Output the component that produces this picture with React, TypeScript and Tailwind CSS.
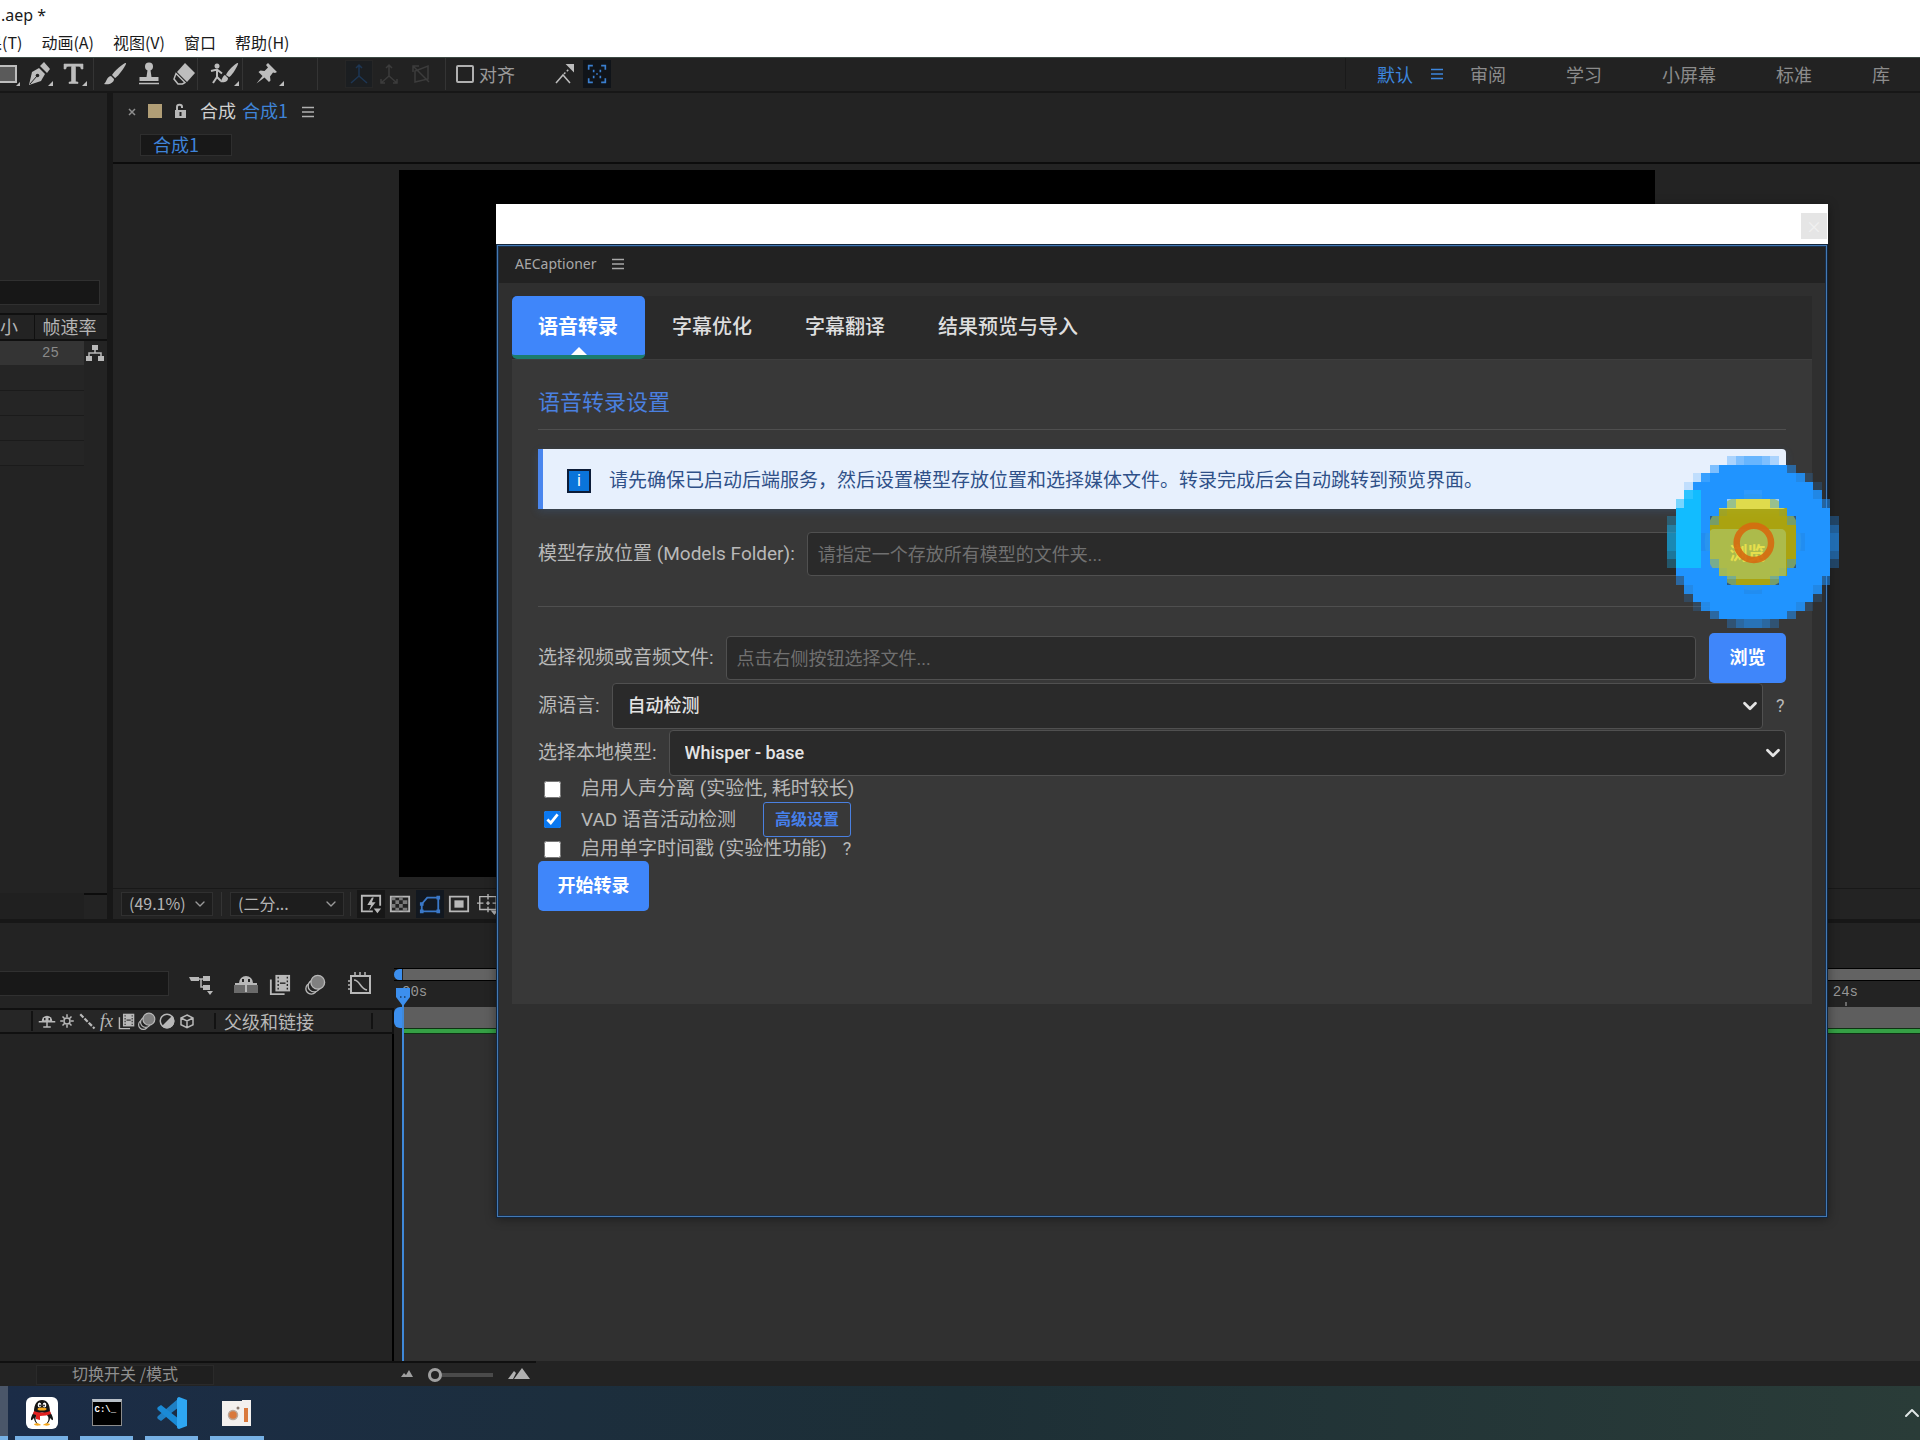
import type { ReactNode } from "react"
import clsx from "clsx"
import { ChevronDown, ChevronUp } from "lucide-react"

type IconProps = { className?: string; box?: string; children: ReactNode }

function Icon({ className, box = "0 0 24 24", children }: IconProps) {
  return (
    <svg viewBox={box} className={clsx("shrink-0", className)} fill="none" stroke="currentColor" strokeWidth="2" aria-hidden="true">
      {children}
    </svg>
  )
}

function Burger({ className }: { className?: string }) {
  return (
    <Icon box="0 0 12 12" className={clsx("h-3 w-3", className)}>
      <path d="M0 1.5h12M0 6h12M0 10.5h12" strokeWidth="1.5" />
    </Icon>
  )
}

/* small corner mark on tools that have a flyout */
const Flyout = () => <path d="M29 23v5h-5z" fill="currentColor" stroke="none" />

function ToolButton({ label, className, children }: { label: string; className?: string; children: ReactNode }) {
  return (
    <button type="button" aria-label={label} className={clsx("h-8 w-[34px] shrink-0", className)}>
      <svg viewBox="0 0 34 32" className="h-8 w-[34px]" fill="none" stroke="currentColor" strokeWidth="2" aria-hidden="true">
        {children}
      </svg>
    </button>
  )
}

const Divider = ({ className }: { className?: string }) => <span className={clsx("h-8 w-px shrink-0 bg-[#343434]", className)} />

function Toolbar() {
  return (
    <div className="flex h-[34px] items-center border-t border-[#3c4a44] bg-[#222222] pb-0.5 text-[#bdbdbd]">
      <div className="flex w-[318px] shrink-0 items-center overflow-hidden">
        <ToolButton label="矩形工具" className="-ml-[10px]">
          <rect x="5" y="8" width="21" height="16" fill="#5a5a5a" />
          <path d="M30 24v4h-4z" fill="currentColor" stroke="none" />
        </ToolButton>
        <ToolButton label="钢笔工具">
          <path d="M5 27l3-13 7-4 6 6-4 7z" fill="currentColor" stroke="none" />
          <path d="M16 8l4-4 6 7-3 4z" fill="currentColor" stroke="none" />
          <path d="M6 26l7-8" stroke="#222" strokeWidth="1" />
          <circle cx="13.500" cy="17.500" r="1.800" fill="#222" stroke="none" />
          <Flyout />
        </ToolButton>
        <ToolButton label="文字工具">
          <path d="M6 6h19v5h-1.800c-.3-2-1-2.700-3-2.700h-2.700v14c0 1.400.6 1.700 2.500 1.800v1.400h-9v-1.400c1.900-.1 2.500-.4 2.500-1.800v-14h-2.700c-2 0-2.700.7-3 2.700H6z" fill="currentColor" strokeWidth=".6" />
          <Flyout />
        </ToolButton>
        <Divider className="mx-px" />
        <ToolButton label="画笔工具">
          <path d="M31 5c1 1-8 14-11 15l-3-3C19 13 30 4 31 5z" fill="currentColor" stroke="none" />
          <path d="M16 18l3 3c0 4-5 6-10 5 3-2 2-7 7-8z" fill="currentColor" stroke="none" />
        </ToolButton>
        <ToolButton label="仿制图章工具">
          <circle cx="20" cy="8.500" r="4" fill="currentColor" stroke="none" />
          <path d="M18.500 12h3l1 7h7v4h-19v-4h7z" fill="currentColor" stroke="none" />
          <path d="M10 25.500h20" strokeWidth="1.500" />
        </ToolButton>
        <ToolButton label="橡皮擦工具">
          <path d="M22 5l10 10-8 9-10-10z" fill="currentColor" stroke="none" />
          <path d="M13 15.500l9 9-2.500 1.500H15l-4-5z" strokeWidth="1.500" />
        </ToolButton>
        <Divider />
        <ToolButton label="Roto 笔刷工具" className="ml-2 mr-0.5">
          <circle cx="11" cy="8" r="2.500" fill="currentColor" stroke="none" />
          <path d="M5 13l6-1.500 5 4M11 11v8l-4 6M11 19l4 4" />
          <path d="M32 5c1 1-6 13-9 14l-3-2C21 13 31 4 32 5z" fill="currentColor" stroke="none" />
          <path d="M19 17l3 3c0 4-4 5-8 4 2-1 2-6 5-7z" fill="currentColor" stroke="none" />
          <path d="M33 23v5h-5z" fill="currentColor" stroke="none" />
        </ToolButton>
        <Divider />
        <ToolButton label="操控点工具" className="ml-2">
          <path d="M17 5l9 9-2 1-2-.5-3 4 .5 4-1.500 1.500-4.500-4.500-8 6 6-7.500-4-4 2-1.500 4 .5 3.500-3.500L15 7z" fill="currentColor" stroke="none" />
          <path d="M33 23v5h-5z" fill="currentColor" stroke="none" />
        </ToolButton>
        <Divider className="ml-auto" />
      </div>

      <div className="flex items-center text-[#3c3c3c]">
        <button type="button" aria-label="本地轴模式" className="ml-[27px] flex h-7 w-7 items-center justify-center border border-[#262626] bg-[#1b1e21] text-[#1d3654]">
          <Icon className="h-6 w-6">
            <path d="M12 14V3M12 14l-8 7M12 14l8 7M9 6l3-3 3 3" strokeWidth="1.500" />
          </Icon>
        </button>
        <button type="button" aria-label="世界轴模式" className="ml-1">
          <Icon className="h-6 w-6">
            <path d="M12 14V3M12 14l-8 7M12 14l8 7M9 6l3-3 3 3M4 17v4h4M16 21h4v-4" strokeWidth="1.500" />
          </Icon>
        </button>
        <button type="button" aria-label="视图轴模式" className="ml-2">
          <Icon className="h-6 w-6">
            <path d="M4 4l16 16M4 10V4h6M6 20V9l13-5v13z" strokeWidth="1.500" />
          </Icon>
        </button>
        <Divider className="ml-3" />
      </div>

      <label className="ml-[10px] flex items-center gap-[5px] text-[18px] leading-6 text-[#9a9a9a]">
        <input type="checkbox" className="h-[18px] w-[18px] appearance-none rounded-xs border-2 border-[#b0b0b0]" />
        对齐
      </label>
      <Icon className="ml-9 h-6 w-6">
        <path d="M5 21l7-8 7 8" strokeWidth="1.500" />
        <path d="M13 12l5-5" strokeWidth="1.500" strokeDasharray="2 2" />
        <path d="M17 3h5v5z" fill="currentColor" />
      </Icon>
      <button type="button" aria-label="对齐选项" className="ml-2 flex h-7 w-7 items-center justify-center bg-[#101419] text-[#3a7fd0]">
        <Icon className="h-5 w-5">
          <path d="M2 7V2h5M17 2h5v5M22 17v5h-5M7 22H2v-5" />
          <path d="M8 7v3M16 7v3M8 14v3M16 14v3M11 12h2" />
        </Icon>
      </button>

      <nav aria-label="工作区" className="-mr-1 ml-auto flex h-full items-center gap-[60px] border-l border-[#1a1a1a] pl-[31px] text-[18px] leading-6 text-[#8c8c8c]">
        <span className="-mr-[33px] flex items-center gap-[18px] text-[#3d86dd]">
          <a href="#default">默认</a>
          <Burger />
        </span>
        <a href="#review">审阅</a>
        <a href="#learn">学习</a>
        <a href="#small">小屏幕</a>
        <a href="#standard">标准</a>
        <a href="#library" className="w-[52px]">库</a>
      </nav>
    </div>
  )
}

function ProjectPanel() {
  return (
    <aside className="flex w-[107px] shrink-0 flex-col overflow-hidden bg-[#232323]">
      <input aria-label="搜索项目" className="mt-[187px] h-[25px] w-[100px] border border-l-0 border-[#303030] bg-[#171717] px-2" />
      <table className="mt-2 w-full table-fixed border-collapse text-left">
        <thead>
          <tr className="h-[26px] border-y-2 border-[#101010] text-[18px] leading-5 text-[#b4b4b4]">
            <th className="w-[34px] border-r border-[#101010] p-0 pb-0.5 font-normal">小</th>
            <th className="w-[50px] whitespace-nowrap p-0 pb-0.5 pl-2 font-normal">帧速率</th>
            <th className="p-0" />
          </tr>
        </thead>
        <tbody>
          <tr className="h-[25px]">
            <td className="bg-[#343434] p-0" />
            <td className="bg-[#343434] p-0 pl-2 font-['Liberation_Mono',monospace] text-sm leading-5 text-[#8a8a8a]">25</td>
            <td className="p-0 pl-0.5 text-[#b8b8b8]">
              <Icon box="0 0 18 18" className="h-[18px] w-[18px]">
                <path d="M6 1h6v5H6zM0 12h6v5H0zM12 12h6v5h-6z" fill="currentColor" stroke="none" />
                <path d="M9 5v4M3 12V9h12v3" strokeWidth="1.500" />
              </Icon>
            </td>
          </tr>
          {[0, 1, 2, 3].map((row) => (
            <tr key={row} className="h-[25px]">
              <td colSpan={2} className="border-b border-[#1b1b1b] bg-[#252525] p-0" />
              <td className="p-0" />
            </tr>
          ))}
        </tbody>
      </table>
      <div className="mt-auto flex h-[26px]">
        <span className="w-[84px] bg-[#202020]" />
        <span className="flex-1 border-t-2 border-[#0c0c0c]" />
      </div>
    </aside>
  )
}

function FooterSelect({ label, value, className }: { label: string; value: string; className: string }) {
  return (
    <span className={clsx("relative flex h-6 items-center border border-[#303030] bg-[#1d1d1d]", className)}>
      <select aria-label={label} className="h-full w-full appearance-none pb-0.5 pl-[7px] leading-5 text-[#b4b4b4]">
        <option>{value}</option>
      </select>
      <ChevronDown className="pointer-events-none absolute right-1 h-4 w-4 text-[#9a9a9a]" />
    </span>
  )
}

function CompositionPanel() {
  return (
    <section className="flex min-w-0 flex-1 flex-col overflow-hidden bg-[#232323]">
      <div className="flex h-9 items-center pl-[15px] text-[18px] leading-6">
        <button type="button" aria-label="关闭合成" className="w-5 text-[#8f8f8f]">
          <Icon box="0 0 8 8" className="mt-0.5 h-2 w-2">
            <path d="M1 1l6 6M7 1L1 7" strokeWidth="1.500" />
          </Icon>
        </button>
        <span className="h-[14px] w-[14px] bg-[#b19e76]" />
        <Icon box="0 0 14 16" className="ml-3 h-4 w-[14px] text-[#b8b8b8]">
          <path d="M1 7h11v8H1z" fill="currentColor" stroke="none" />
          <path d="M3 8V4c0-3 5-3 5 0v1" />
          <path d="M6.500 9v4" stroke="#232323" />
        </Icon>
        <span className="ml-3 pb-0.5 text-[#d0d0d0]">合成</span>
        <span className="ml-1.5 pb-0.5 text-[#3f83d8]">合成1</span>
        <Burger className="ml-[14px] mt-0.5 text-[#b0b0b0]" />
      </div>
      <div className="flex h-[35px] items-start border-b-2 border-[#0c0c0c] pl-[27px] pt-[5px]">
        <button type="button" className="h-[22px] w-[92px] border border-[#2e2e2e] bg-[#181818] pb-0.5 pl-3 text-left text-[18px] leading-[18px] text-[#3f83d8]">
          合成1
        </button>
      </div>
      <div className="ml-[286px] mr-[265px] mt-1.5 flex-1 bg-black" />
      <div className="mt-[11px] flex h-[31px] items-center border-t border-[#181818] pl-2 text-base text-[#b8b8b8]">
        <FooterSelect label="放大率" value="(49.1%)" className="w-[92px]" />
        <Divider className="mx-2 !h-6" />
        <FooterSelect label="分辨率" value="(二分..." className="w-[114px]" />
        <Divider className="mx-1.5 !h-6" />
        <button type="button" aria-label="快速预览" className="flex h-7 w-7 items-center justify-center bg-[#171717]">
          <Icon className="h-[22px] w-[22px]">
            <path d="M14 20H2V3h20v11" />
            <path d="M13 5l-5 8h4l-2 6 7-9h-4l2-5z" fill="currentColor" stroke="none" />
            <path d="M15 17h8l-4 5z" fill="currentColor" stroke="none" />
          </Icon>
        </button>
        <Icon className="ml-1 h-[22px] w-[22px]">
          <path d="M2 4h20v16H2z" />
          <path d="M3 4h4v4H3zM11 4h4v4h-4zM7 8h4v4H7zM15 8h5v4h-5zM3 12h4v4H3zM11 12h4v4h-4zM7 16h4v4H7zM15 16h5v4h-5z" fill="#7a7a7a" stroke="none" />
        </Icon>
        <button type="button" aria-label="切换蒙版可见性" className="ml-[5px] flex h-7 w-7 items-center justify-center bg-[#121820] text-[#3a78c8]">
          <Icon className="h-[22px] w-[22px]">
            <path d="M3 20v-8l6-7h12v15z" />
            <path d="M1 18h4v4H1zM19 3h4v4h-4zM19 18h4v4h-4zM1 10h4v4H1z" fill="currentColor" stroke="none" />
          </Icon>
        </button>
        <Icon className="ml-1 h-[22px] w-[22px]">
          <path d="M2 4h20v16H2z" />
          <path d="M7 8h10v8H7z" fill="currentColor" stroke="none" />
        </Icon>
        <Icon className="ml-[7px] h-[22px] w-[22px]">
          <path d="M3 4h18v14H3zM0 11h7M17 11h7M12 1v6M12 15v6M10 11h4M12 9v4" strokeWidth="1.500" />
          <path d="M15 19h8l-4 5z" fill="currentColor" stroke="none" />
        </Icon>
      </div>
    </section>
  )
}

const ShyIcon = ({ className }: { className?: string }) => (
  <Icon className={className}>
    <path d="M5 12a7 7 0 0 1 14 0z" fill="currentColor" stroke="none" />
    <path d="M12 10v10M1 13h22M7 20h10" />
    <path d="M9 8v3M15 8v3" stroke="#232323" />
  </Icon>
)

const FilmIcon = ({ className }: { className?: string }) => (
  <Icon className={className}>
    <path d="M7 1h16v18H7z" fill="currentColor" stroke="none" />
    <path d="M2 6v16h15" />
    <path d="M10 3v15M20 3v15" stroke="#232323" strokeDasharray="2 2" strokeWidth="1.500" />
    <path d="M12 10h6" stroke="#232323" strokeWidth="1.500" />
  </Icon>
)

const BlurIcon = ({ className }: { className?: string }) => (
  <Icon className={className}>
    <circle cx="8" cy="16" r="6" strokeWidth="1.500" />
    <circle cx="11" cy="13" r="6.500" fill="#232323" strokeWidth="1.500" />
    <circle cx="15" cy="9" r="7.500" fill="#808080" strokeWidth="1.500" />
  </Icon>
)

function TimelineSwitches() {
  return (
    <div className="flex w-[394px] shrink-0 flex-col bg-[#232323] text-[#b8b8b8]">
      <div className="flex h-[85px] items-end pb-3">
        <input aria-label="搜索图层" className="h-[25px] w-[169px] border border-l-0 border-[#303030] bg-[#181818] px-2" />
        <Icon className="ml-5 h-6 w-6">
          <path d="M0 5h10v4H2zM14 4h7v5h-7zM14 13h7v5h-7z" fill="currentColor" stroke="none" />
          <path d="M9 7h6M12 7v8h4" strokeWidth="1.500" />
          <path d="M18 19h6l-3 4z" fill="currentColor" stroke="none" />
        </Icon>
        <Icon className="ml-[21px] h-6 w-6">
          <path d="M0 13h24v8H0z" fill="#6a6a6a" stroke="none" />
          <path d="M5 11a7 7 0 0 1 14 0z" fill="currentColor" stroke="none" />
          <path d="M12 9v11M1 12h22" />
          <path d="M9 7v3M15 7v3" stroke="#232323" />
        </Icon>
        <FilmIcon className="ml-[11px] h-[22px] w-[22px]" />
        <BlurIcon className="ml-[13px] h-[22px] w-[22px]" />
        <Icon className="ml-[22px] h-6 w-6">
          <path d="M3 4h19v17H3z" />
          <path d="M6 8c6 0 6 9 13 10M7 0v3M12 0v3M17 0v3M0 9h3M0 13h3M0 17h3" strokeWidth="1.500" />
        </Icon>
      </div>
      <div className="flex h-[26px] items-center border-y-2 border-r-2 border-[#101010] bg-[#262626]">
        <div className="ml-[31px] flex items-center gap-0.5 border-l-2 border-[#121212] pl-[5px]">
          <ShyIcon className="h-[18px] w-[18px]" />
          <Icon className="h-[18px] w-[18px]">
            <circle cx="12" cy="12" r="4" />
            <path d="M12 3v4M12 17v4M3 12h4M17 12h4M6 6l3 3M15 15l3 3M18 6l-3 3M6 18l3-3" />
          </Icon>
          <Icon className="h-[18px] w-[18px]">
            <path d="M3 3l19 19" strokeWidth="3" strokeDasharray="6 2" />
          </Icon>
          <span className="w-[18px] pl-0.5 font-['Liberation_Serif',serif] text-[18px] italic leading-5">fx</span>
          <FilmIcon className="h-[17px] w-[17px]" />
          <BlurIcon className="h-[19px] w-[19px]" />
          <Icon className="h-[18px] w-[18px]">
            <circle cx="12" cy="12" r="9" />
            <path d="M19 5A9 9 0 0 1 5 19z" fill="currentColor" stroke="none" />
          </Icon>
          <Icon className="h-[18px] w-[18px]">
            <path d="M12 4l8 4v9l-8 4-8-4V8zM4 8l8 4 8-4M12 12v9" />
          </Icon>
        </div>
        <span className="ml-[18px] h-4 w-0.5 bg-[#121212]" />
        <span className="ml-2 pb-px text-[18px] leading-5">父级和链接</span>
        <span className="ml-[57px] h-4 w-0.5 bg-[#121212]" />
      </div>
      <div className="flex-1 border-r-2 border-black" />
    </div>
  )
}

function TimelineTrack() {
  return (
    <div className="flex min-w-0 flex-1 flex-col bg-[#232323]">
      <div className="mt-[45px] flex h-[13px] items-stretch border-y border-black">
        <span className="w-2 rounded-l-full bg-[#3c8fee]" />
        <span className="ml-px flex-1 bg-[#636363]" />
      </div>
      <div className="flex h-[26px] items-start pt-px font-['Liberation_Mono',monospace] text-sm leading-5 text-[#969696]">
        <span className="relative ml-2">
          00s
          <svg viewBox="0 0 16 20" className="absolute -left-[7px] top-1.5 h-5 w-4" aria-hidden="true">
            <path d="M1 0h14v9l-6 8H7L1 9z" fill="#3c8fee" />
            <path d="M5 9h1.500M9 9h1.500" stroke="#1a3c66" strokeWidth="1.500" />
          </svg>
        </span>
        <span className="ml-auto mr-[62px] flex flex-col">
          24s
          <span className="ml-3 h-1 w-0.5 bg-[#6a6a6a]" />
        </span>
      </div>
      <div className="flex h-[21px]">
        <span className="w-2 rounded-l-md bg-[#3c8fee]" />
        <span className="flex-1 bg-[#5e5e5e]" />
      </div>
      <div className="ml-[10px] h-1.5 border-y border-[#0d3312] bg-[#35a045]" />
      <div className="flex flex-1">
        <span className="w-2" />
        <span className="-mt-8 w-0.5 bg-[#3f88d8]" />
        <span className="flex-1 bg-[#303030]" />
      </div>
    </div>
  )
}

function Timeline() {
  return (
    <section className="flex h-[463px] flex-col">
      <div className="flex flex-1 bg-[#232323]">
        <TimelineSwitches />
        <TimelineTrack />
      </div>
      <div className="flex h-[25px] items-center bg-[#232323]">
        <span className="flex h-full w-[536px] items-center border-t-2 border-[#101010]">
          <button type="button" className="ml-9 h-5 w-[178px] border border-[#2a2a2a] bg-[#1f1f1f] pb-1 text-base leading-[14px] text-[#8f8f8f]">
            切换开关 /模式
          </button>
          <Icon box="0 0 12 8" className="mb-1 ml-[187px] h-2 w-3 text-[#a0a0a0]">
            <path d="M0 8l3-4 2 2 3-5 4 7z" fill="currentColor" stroke="none" />
          </Icon>
          <input
            type="range"
            aria-label="时间轴缩放"
            defaultValue={0}
            className="ml-[15px] h-1 w-[65px] appearance-none bg-[#4a4a4a] [&::-webkit-slider-thumb]:h-[14px] [&::-webkit-slider-thumb]:w-[14px] [&::-webkit-slider-thumb]:appearance-none [&::-webkit-slider-thumb]:rounded-full [&::-webkit-slider-thumb]:border-[3px] [&::-webkit-slider-thumb]:border-[#a0a0a0] [&::-webkit-slider-thumb]:bg-[#232323]"
          />
          <Icon box="0 0 22 12" className="mb-0.5 ml-[15px] h-3 w-[22px] text-[#b0b0b0]">
            <path d="M0 11l6-8 2 2-3 6zM6 11l8-11 8 11z" fill="currentColor" stroke="none" />
          </Icon>
        </span>
      </div>
    </section>
  )
}

function Taskbar() {
  return (
    <footer className="flex h-[54px] items-stretch bg-linear-to-r from-[#1b2c47] via-[#1d2f36] to-[#2a3c38]">
      <span className="w-2 border-b-4 border-[#76b0e4] bg-[#4a5669]" />
      <a href="#qq" aria-label="QQ" className="ml-[7px] flex w-[53px] justify-center border-b-4 border-[#76b0e4] pt-[11px]">
        <svg viewBox="0 0 32 32" className="h-8 w-8" aria-hidden="true">
          <rect width="32" height="32" rx="6" fill="#fff" />
          <path d="M8 15c-3 4-4 9-2 8l2-2c0 3 2 5 3 6h10c1-1 3-3 3-6l2 2c2 1 1-4-2-8 0-8-3-12-8-12S8 7 8 15z" fill="#151515" />
          <ellipse cx="16" cy="22" rx="6.500" ry="6.500" fill="#fff" />
          <ellipse cx="13.500" cy="8" rx="1.800" ry="2.600" fill="#fff" />
          <ellipse cx="18.500" cy="8" rx="1.800" ry="2.600" fill="#fff" />
          <circle cx="14" cy="8.500" r=".9" fill="#111" />
          <circle cx="18" cy="8.500" r=".9" fill="#111" />
          <ellipse cx="16" cy="12" rx="4.500" ry="1.500" fill="#f6a81c" />
          <path d="M8 14c5 2 11 2 16 0l1 3c-3 1-7 2-11 2v4l-4-1v-4l-3-1z" fill="#e02020" />
          <path d="M8 27c2-1 5-1 7 1-2 1-7 1-7-1zM24 27c-2-1-5-1-7 1 2 1 7 1 7-1z" fill="#f6a81c" />
        </svg>
      </a>
      <a href="#terminal" aria-label="命令提示符" className="ml-3 flex w-[53px] justify-center border-b-4 border-[#76b0e4] pt-[13px]">
        <span className="h-[27px] w-[30px] border border-[#8c8c8c] border-t-[3px] border-t-[#b8c0c8] bg-black pl-0.5 text-left font-['Liberation_Mono',monospace] text-[9px] font-bold leading-4 text-white">
          C:\_
        </span>
      </a>
      <a href="#vscode" aria-label="VS Code" className="ml-3 flex w-[53px] justify-center border-b-4 border-[#76b0e4] pt-[11px]">
        <svg viewBox="0 0 32 32" className="h-8 w-8" aria-hidden="true">
          <path d="M23 1v9L5 24l-3-2c-1-1-1-2 0-3z" fill="#1f7fc4" />
          <path d="M23 31v-9L5 8l-3 2c-1 1-1 2 0 3z" fill="#1a8ad6" />
          <path d="M23 0l8 3v26l-8 3c-1 0-2-1-2-2V2c0-1 1-2 2-2z" fill="#2ea6f2" />
        </svg>
      </a>
      <a href="#recorder" aria-label="录屏" className="ml-3 flex w-[54px] justify-center border-b-4 border-[#76b0e4] pt-[14px]">
        <svg viewBox="0 0 30 26" className="h-[26px] w-[30px]" aria-hidden="true">
          <path d="M0 1h20V0h9v26H0z" fill="#f3f0ee" />
          <circle cx="11" cy="15" r="4.500" fill="#d9783c" stroke="#b9a79a" strokeWidth="1.500" />
          <circle cx="16" cy="8" r="1.500" fill="#8a7a70" />
          <path d="M22 8h4v14h-4z" fill="#d9783c" />
        </svg>
      </a>
      <button type="button" aria-label="显示隐藏的图标" className="-mr-1 ml-auto text-[#e0e6e6]">
        <ChevronUp className="h-6 w-6" />
      </button>
    </footer>
  )
}

const GRID = 20

/* pixelated halo that marks a mouse click */
function ClickHalo() {
  const cells: ReactNode[] = []
  for (let row = 0; row < GRID; row++) {
    for (let col = 0; col < GRID; col++) {
      const distance = Math.hypot(col - 9.5, row - 9.5)
      const outer = Math.min(1, (10.1 - distance) * 1.1)
      const inner = Math.min(1, (distance - 4.9) * 1.5)
      const alpha = Math.min(outer, inner)
      if (alpha <= 0.05) continue
      const cyan = col < 4 && row > 3 && row < 13
      cells.push(<rect key={`${row}-${col}`} x={col} y={row} width="1" height="1" fill={cyan ? "#12bcff" : "#2094ff"} opacity={alpha} />)
    }
  }
  return (
    <svg viewBox="0 0 20 20" className="pointer-events-none absolute -left-[42px] -top-[73px] z-10 h-[172px] w-[172px] max-w-none" aria-hidden="true">
      <circle cx="10" cy="10" r="5.600" fill="#dcd200" opacity=".7" />
      <g shapeRendering="crispEdges">{cells}</g>
      <circle cx="10.100" cy="10.100" r="2" fill="none" stroke="#d66a10" strokeWidth=".75" opacity=".9" />
    </svg>
  )
}

const fieldClass = "rounded border border-[#505050] bg-[#2a2a2a] text-[18px] text-[#e4e4e4]"
const primaryClass = "h-[50px] shrink-0 rounded-[5px] bg-[#3f86fa] text-[18px] font-bold text-white"

function FileRow({ id, label, placeholder, children }: { id: string; label: string; placeholder: string; children?: ReactNode }) {
  return (
    <div className="flex h-[50px] items-center">
      <label htmlFor={id} className="mr-3 shrink-0">{label}</label>
      <input id={id} type="text" placeholder={placeholder} className={clsx(fieldClass, "mr-[13px] h-11 min-w-0 flex-1 px-[10px] placeholder:text-[#707070]")} />
      <span className="relative">
        <button type="button" className={clsx(primaryClass, "w-[77px]")}>浏览</button>
        {children}
      </span>
    </div>
  )
}

function SelectField({ id, value }: { id: string; value: string }) {
  return (
    <span className="relative flex min-w-0 flex-1 items-center">
      <select id={id} className={clsx(fieldClass, "h-[46px] w-full appearance-none px-[15px] font-medium")}>
        <option>{value}</option>
      </select>
      <ChevronDown strokeWidth={3} className="pointer-events-none absolute right-0.5 h-[22px] w-[22px] text-[#e4e4e4]" />
    </span>
  )
}

function CaptionerWindow() {
  return (
    <div role="dialog" aria-label="AECaptioner" className="absolute left-[496px] right-[92px] top-[204px] flex h-[1013px] flex-col shadow-[0_2px_10px_rgba(0,0,0,0.4)]">
      <div className="flex h-10 shrink-0 items-center justify-end bg-white">
        <button type="button" aria-label="关闭" className="mt-1 mr-px h-[26px] w-[26px] bg-[#e5e5e5] text-base leading-6 text-[#f1f1f1]">×</button>
      </div>
      <div className="mx-px mt-px flex flex-1 flex-col border border-[#4379b4] bg-[#2f2f2f] shadow-[0_0_0_1px_#14263c,inset_0_0_0_1px_#1b2f48]">
        <div className="mx-px mt-px flex h-9 items-center gap-[15px] bg-[#222222] pb-0.5 pl-4 font-['Noto_Sans',sans-serif] text-sm leading-5 text-[#a8a8a8]">
          AECaptioner
          <Burger />
        </div>

        <div className="mx-[14px] mt-[13px]">
          <div role="tablist" className="flex h-16 border-b border-[#3e3e3e] bg-[#2a2a2a] text-[20px] font-medium text-[#dedede]">
            <button type="button" role="tab" aria-selected="true" className="relative h-[63px] rounded-[5px] border-b-4 border-[#1c7c6c] bg-[#3f86fa] pl-[26px] pr-[27px] font-bold text-white">
              语音转录
              <span className="absolute bottom-0 left-1/2 -ml-2 border-x-8 border-b-8 border-x-transparent border-b-white" />
            </button>
            <button type="button" role="tab" aria-selected="false" className="px-[27px] pb-[3px]">字幕优化</button>
            <button type="button" role="tab" aria-selected="false" className="px-[26px] pb-[3px]">字幕翻译</button>
            <button type="button" role="tab" aria-selected="false" className="px-[27px] pb-[3px]">结果预览与导入</button>
          </div>

          <form className="bg-[#383838] px-[26px] pb-[93px] pt-7 font-['Roboto','Noto_Sans_CJK_SC',sans-serif] text-[19px] leading-6 text-[#b9b9b9]">
            <h2 className="border-b border-[#4f4f4f] pb-[11px] text-[22px] leading-[30px] text-[#4a80e0]">语音转录设置</h2>

            <div className="mt-[19px] flex h-[60px] items-center rounded-r border-l-[5px] border-[#4a86ee] bg-[#e7f0fd] pl-6 pt-1 text-[#2f5088] shadow-[0_3px_8px_rgba(60,120,200,0.2)]">
              <span className="mr-[18px] flex h-6 w-6 shrink-0 items-center justify-center border-2 border-[#0c1c38] bg-[#0a74da] text-base leading-5 text-white">i</span>
              <p className="whitespace-nowrap">请先确保已启动后端服务，然后设置模型存放位置和选择媒体文件。转录完成后会自动跳转到预览界面。</p>
            </div>

            <div className="mt-5 border-b border-[#4f4f4f] pb-[27px]">
              <FileRow id="models" label="模型存放位置 (Models Folder):" placeholder="请指定一个存放所有模型的文件夹...">
                <ClickHalo />
              </FileRow>
            </div>

            <div className="mt-[26px]">
              <FileRow id="media" label="选择视频或音频文件:" placeholder="点击右侧按钮选择文件..." />
            </div>

            <div className="flex items-center">
              <label htmlFor="language" className="mr-3 shrink-0">源语言:</label>
              <SelectField id="language" value="自动检测" />
              <span title="帮助" className="ml-[13px] w-2.5 text-lg leading-6">?</span>
            </div>

            <div className="mt-px flex items-center">
              <label htmlFor="model" className="mr-3 shrink-0">选择本地模型:</label>
              <SelectField id="model" value="Whisper - base" />
            </div>

            <div className="flex h-[26px] items-center">
              <label className="flex items-center gap-5">
                <input type="checkbox" className="ml-1.5 h-[17px] w-[17px]" />
                启用人声分离 (实验性, 耗时较长)
              </label>
            </div>
            <div className="flex h-[35px] items-center gap-[27px]">
              <label className="flex items-center gap-5">
                <input type="checkbox" defaultChecked className="ml-1.5 h-[17px] w-[17px] accent-[#0a78f0]" />
                VAD 语音活动检测
              </label>
              <button type="button" className="h-[35px] w-[88px] rounded-[3px] border border-[#4a80e0] text-base font-bold text-[#4680ec]">高级设置</button>
            </div>
            <div className="flex h-6 items-center gap-4">
              <label className="flex items-center gap-5">
                <input type="checkbox" className="ml-1.5 h-[17px] w-[17px]" />
                启用单字时间戳 (实验性功能)
              </label>
              <span title="帮助" className="text-lg leading-6">?</span>
            </div>

            <button type="button" className={clsx(primaryClass, "block w-[111px]")}>开始转录</button>
          </form>
        </div>
      </div>
    </div>
  )
}

export default function App() {
  return (
    <div className="relative flex min-h-screen flex-col overflow-hidden bg-[#171717] font-['Noto_Sans_CJK_SC',sans-serif]">
      <header className="h-[57px] bg-white text-base text-[#1a1a1a]">
        <h1 className="h-[31px] pl-px font-['Noto_Sans',sans-serif] text-base leading-[31px]">.aep *</h1>
        <nav aria-label="菜单" className="-ml-[14px] flex gap-[19px] leading-[22px]">
          <a href="#effect">果(T)</a>
          <a href="#animation">动画(A)</a>
          <a href="#view">视图(V)</a>
          <a href="#window">窗口</a>
          <a href="#help">帮助(H)</a>
        </nav>
      </header>
      <Toolbar />
      <main className="mt-0.5 flex flex-1 gap-1.5">
        <ProjectPanel />
        <CompositionPanel />
      </main>
      <div className="h-1" />
      <Timeline />
      <Taskbar />
      <CaptionerWindow />
    </div>
  )
}
